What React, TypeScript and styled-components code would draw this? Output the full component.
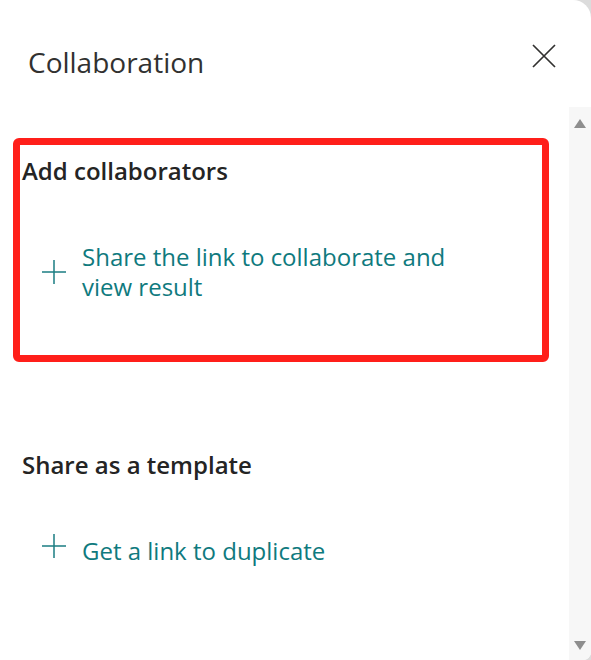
import styled, { createGlobalStyle } from "styled-components";

const GlobalStyle = createGlobalStyle`
  html, body {
    margin: 0;
    padding: 0;
    background: #dcdcdc;
  }
  #root {
    width: 591px;
    height: 660px;
  }
`;

const PlusIcon = () => (
  <svg width="24" height="24" viewBox="0 0 24 24" fill="none">
    <path d="M12 0v24M0 12h24" stroke="#1b7e82" strokeWidth="1.5" />
  </svg>
);

const CloseIcon = () => (
  <svg width="26" height="26" viewBox="0 0 26 26" fill="none">
    <path d="M2 2l22 22M24 2L2 24" stroke="#323130" strokeWidth="1.7" />
  </svg>
);

const App = () => {
  return (
    <>
      <GlobalStyle />
      <Panel>
        <Header>
          <Title>Collaboration</Title>
          <CloseButton aria-label="Close">
            <CloseIcon />
          </CloseButton>
        </Header>
        <Body>
          <Scroller>
            <HighlightBox>
              <SectionTitle>Add collaborators</SectionTitle>
              <LinkRow>
                <IconSlot>
                  <PlusIcon />
                </IconSlot>
                <LinkText>Share the link to collaborate and view result</LinkText>
              </LinkRow>
            </HighlightBox>
            <Section>
              <SectionTitle>Share as a template</SectionTitle>
              <LinkRow>
                <IconSlot $lift={5}>
                  <PlusIcon />
                </IconSlot>
                <LinkText>Get a link to duplicate</LinkText>
              </LinkRow>
            </Section>
          </Scroller>
          <ScrollTrack>
            <Arrow $dir="up" />
            <Arrow $dir="down" />
          </ScrollTrack>
        </Body>
      </Panel>
    </>
  );
};

const Panel = styled.div`
  width: 591px;
  height: 660px;
  background: #ffffff;
  border-radius: 0 18px 8px 0;
  display: flex;
  flex-direction: column;
  overflow: hidden;
  font-family: "Open Sans", "Noto Sans", sans-serif;
`;

const Header = styled.header`
  height: 107px;
  display: flex;
  align-items: center;
  justify-content: space-between;
  padding: 0 34px 0 28px;
  box-sizing: border-box;
`;

const Title = styled.h1`
  margin: 16px 0 0;
  font-size: 28px;
  font-weight: 400;
  color: #323130;
`;

const CloseButton = styled.button`
  border: none;
  background: none;
  padding: 0;
  margin-top: 4px;
  width: 26px;
  height: 26px;
  display: flex;
`;

const Body = styled.div`
  flex: 1;
  display: flex;
  min-height: 0;
`;

const Scroller = styled.div`
  flex: 1;
  display: flex;
  flex-direction: column;
  padding: 31px 20px 0 13px;
`;

const HighlightBox = styled.section`
  border: 7px solid #ff1f1a;
  border-radius: 6px;
  height: 224px;
  box-sizing: border-box;
  padding: 11px 0 0 2px;
`;

const Section = styled.section`
  padding: 88px 0 0 9px;
`;

const SectionTitle = styled.h2`
  margin: 0;
  font-size: 24px;
  font-weight: 600;
  line-height: 30px;
  color: #242424;
`;

const LinkRow = styled.div`
  display: flex;
  align-items: center;
  margin-top: 56px;
  padding-left: 20px;
`;

const IconSlot = styled.span<{ $lift?: number }>`
  display: flex;
  width: 40px;
  transform: translateY(${(p) => -(p.$lift ?? 0)}px);
`;

const LinkText = styled.span`
  max-width: 390px;
  font-size: 24px;
  line-height: 30px;
  color: #0f7a7e;
`;

const ScrollTrack = styled.div`
  width: 22px;
  background: #f7f7f7;
  display: flex;
  flex-direction: column;
  justify-content: space-between;
  align-items: center;
  padding: 12px 0 10px;
  box-sizing: border-box;
`;

const Arrow = styled.span<{ $dir: "up" | "down" }>`
  width: 0;
  height: 0;
  border-left: 6px solid transparent;
  border-right: 6px solid transparent;
  ${(p) =>
    p.$dir === "up"
      ? "border-bottom: 9px solid #8e8e8e;"
      : "border-top: 9px solid #8e8e8e;"}
`;

export default App;
